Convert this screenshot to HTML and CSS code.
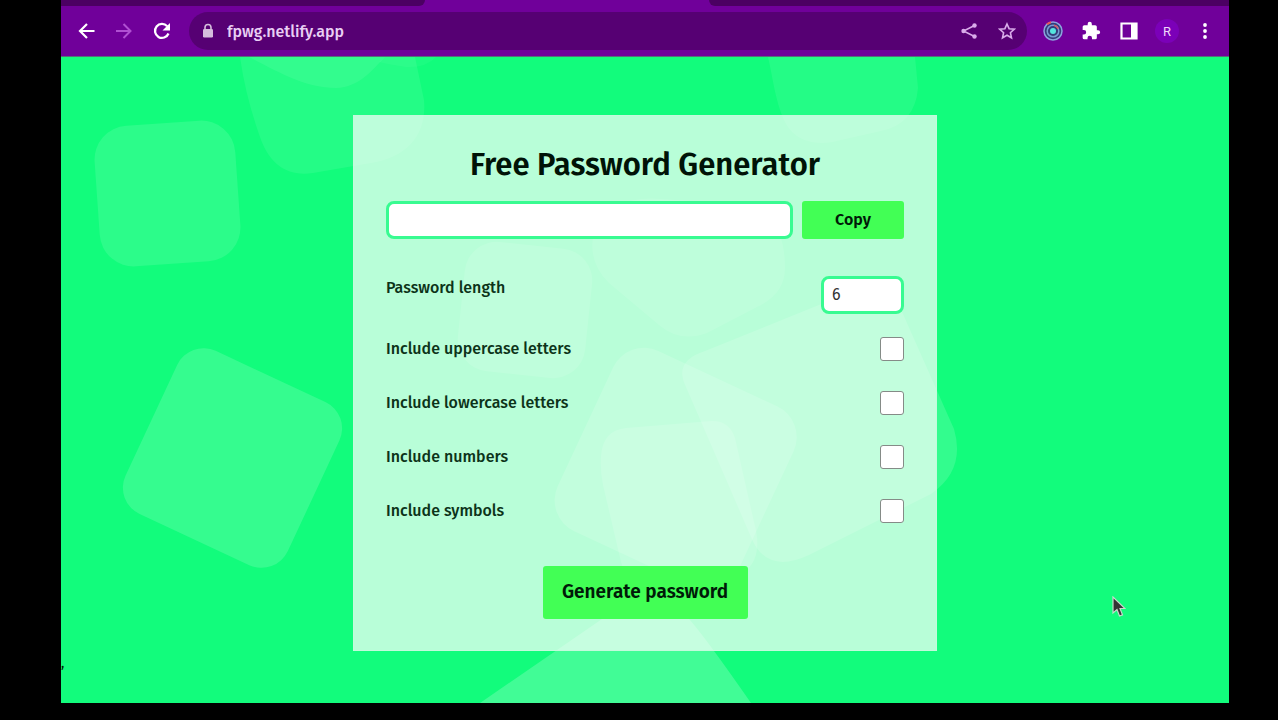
FILE: index.html
```
<!DOCTYPE html>
<html lang="en">
<head>
<meta charset="utf-8">
<meta name="viewport" content="width=device-width, initial-scale=1">
<title>Free Password Generator</title>
<link rel="stylesheet" href="styles.css">
</head>
<body>
<div class="browser">
  <header class="chrome">
    <div class="tabs"><span class="tab tab-before"></span><span class="tab-active"></span><span class="tab tab-after"></span></div>
    <div class="toolbar">
      <nav class="nav" aria-label="Browser navigation">
        <button class="icon" aria-label="Back"><svg width="20" height="20" viewBox="0 0 20 20"><path d="M18.500 10H4M11 3l-7 7 7 7" fill="none" stroke="#fff" stroke-width="2.200"/></svg></button>
        <button class="icon" aria-label="Forward"><svg width="20" height="20" viewBox="0 0 20 20"><path d="M2 10h14.500M9.500 3l7 7-7 7" fill="none" stroke="#b04fd2" stroke-width="2"/></svg></button>
        <button class="icon" aria-label="Reload"><svg width="20" height="20" viewBox="0 0 20 20"><path d="M16.500 12.500A7 7 0 1 1 15.200 5.200" fill="none" stroke="#fff" stroke-width="2.300"/><path d="M18 2v7.500h-7.500z" fill="#fff"/></svg></button>
      </nav>
      <div class="address">
        <svg width="12" height="16" viewBox="0 0 12 16"><path d="M3 7V4.500a3 3 0 0 1 6 0V7" fill="none" stroke="#d5bddc" stroke-width="1.600"/><rect x="1" y="6" width="10" height="8.500" rx="1.200" fill="#d5bddc"/></svg>
        <input class="url" type="text" aria-label="Address" value="fpwg.netlify.app">
        <button class="icon" aria-label="Share"><svg width="18" height="18" viewBox="0 0 18 18"><path d="M14.500 3.500 3.500 9l11 5.500" fill="none" stroke="#d9acea" stroke-width="1.500"/><g fill="#d9acea"><circle cx="14.500" cy="3.500" r="2.200"/><circle cx="3.500" cy="9" r="2.200"/><circle cx="14.500" cy="14.500" r="2.200"/></g></svg></button>
        <button class="icon" aria-label="Bookmark"><svg width="18" height="18" viewBox="0 0 18 18"><path d="m9 2 2.100 4.700 5.200.5-3.900 3.500 1.100 5.100L9 13.200l-4.500 2.600 1.100-5.100-3.900-3.500 5.200-.5z" fill="none" stroke="#d9acea" stroke-width="1.600"/></svg></button>
      </div>
      <div class="extensions">
        <button class="icon" aria-label="Rings extension"><svg width="20" height="20" viewBox="0 0 20 20"><circle cx="10" cy="10" r="9" fill="#343d7c" stroke="#8ba5dd" stroke-width="1.500"/><path d="M4 3.300a9 9 0 0 1 4-2.100" fill="none" stroke="#e85757" stroke-width="2"/><circle cx="10" cy="10" r="5.800" fill="none" stroke="#789bd3" stroke-width="1.500"/><path d="M11 4.300a6 6 0 0 1 4.300 3.500" fill="none" stroke="#dc5968" stroke-width="1.500"/><circle cx="10" cy="10" r="3" fill="#55e5df"/></svg></button>
        <button class="icon" aria-label="Extensions"><svg width="20" height="20" viewBox="0 0 24 24"><path fill="#fff" d="M20.500 11H19V7a2 2 0 0 0-2-2h-4V3.500a2.500 2.500 0 0 0-5 0V5H4a2 2 0 0 0-2 2v3.800h1.500a2.700 2.700 0 0 1 0 5.400H2V20a2 2 0 0 0 2 2h3.800v-1.500a2.700 2.700 0 0 1 5.400 0V22H17a2 2 0 0 0 2-2v-4h1.500a2.500 2.500 0 0 0 0-5z"/></svg></button>
        <button class="icon" aria-label="Side panel"><svg width="18" height="18" viewBox="0 0 18 18"><path d="M1.500 1.500h15v15h-15z" fill="none" stroke="#fff" stroke-width="2.200"/><path d="M11 1h6v16h-6z" fill="#fff"/></svg></button>
        <button class="icon avatar" aria-label="Profile">R</button>
        <button class="icon" aria-label="Menu"><svg width="6" height="18" viewBox="0 0 6 18"><g fill="#fff"><circle cx="3" cy="3" r="1.900"/><circle cx="3" cy="9" r="1.900"/><circle cx="3" cy="15" r="1.900"/></g></svg></button>
      </div>
    </div>
  </header>
  <main class="page">
    <svg class="backdrop" viewBox="0 0 1168 646" preserveAspectRatio="xMidYMid slice" aria-hidden="true">
      <g fill="#fff">
        <rect x="36" y="66" width="141" height="141" rx="34" transform="rotate(-4 106.500 136.500)" opacity=".11"/>
        <rect x="82" y="311" width="179" height="180" rx="29" transform="rotate(25 171.500 401)" opacity=".15"/>
        <path d="M179 0 C183 28 190 55 199 80 C208 106 225 120 252 116 L310 106 C348 100 366 76 363 43 L354 0Z" opacity=".08"/>
        <path d="M188 0 C217 15 244 31 275 31 C299 30 311 13 324 0Z" opacity=".07"/>
        <path d="M324 0H375Q365 11 345 10Q325 7 318 5Z" opacity=".04"/>
        <path d="M707 0 C712 21 714 43 723 63 C733 85 756 90 780 83 L820 74 Q854 67 857 31 L854 0Z" opacity=".08"/>
        <rect x="400" y="188" width="128" height="130" rx="32" transform="rotate(6 464 253)" opacity=".1"/>
        <path d="M533 174Q551 138 600 142L690 148Q724 162 724 211Q724 237 696 250L646 276Q619 286 598 268L548 226Q526 205 533 174Z" opacity=".09"/>
        <path d="M625 330 Q612 304 644 294 L790 235 Q825 224 842 257 L893 372 Q905 413 870 437 L748 498 Q705 518 690 480Z" opacity=".14"/>
        <rect x="515" y="312" width="199" height="199" rx="34" transform="rotate(25 614 412)" opacity=".14"/>
        <path d="M540 399Q542 373 565 371L650 364Q668 363 674 381L693 465Q705 508 674 520L610 536Q570 541 560 505L542 428Q539 414 540 399Z" opacity=".13"/>
        <path d="M419 646 L541 562 Q584 530 622 556 Q633 564 690 646Z" opacity=".2"/>
      </g>
    </svg>
    <form class="card">
      <h1 class="title">Free Password Generator</h1>
      <div class="result">
        <input class="field" type="text" aria-label="Generated password">
        <button class="btn btn-copy" type="button">Copy</button>
      </div>
      <div class="options">
        <div class="row row-length"><label for="length">Password length</label><input class="field field-length" id="length" type="number" value="6"></div>
        <div class="row"><label for="upper">Include uppercase letters</label><input class="check" id="upper" type="checkbox"></div>
        <div class="row"><label for="lower">Include lowercase letters</label><input class="check" id="lower" type="checkbox"></div>
        <div class="row"><label for="numbers">Include numbers</label><input class="check" id="numbers" type="checkbox"></div>
        <div class="row"><label for="symbols">Include symbols</label><input class="check" id="symbols" type="checkbox"></div>
      </div>
      <button class="btn btn-generate" type="button">Generate password</button>
    </form>
    <span class="stray">,</span>
    <svg class="pointer" width="14" height="22" viewBox="0 0 14 22" aria-hidden="true"><path d="M1 1v16l4-3.500 2.500 6.500 3-1.200L8 12.500h5z" fill="#343434" stroke="#c8d8cc" stroke-width="1.200"/></svg>
  </main>
</div>
</body>
</html>
```
FILE: styles.css
```
* { box-sizing: border-box; }

body {
  margin: 0;
  background: #000;
  color: #001b08;
  font-family: "Fira Sans", "Noto Sans", sans-serif;
}

button, input { font: inherit; color: inherit; }

.browser {
  display: flex;
  flex-direction: column;
  min-height: 100vh;
  padding: 0 49px 17px 61px;
}

.chrome { background: #70009a; border-bottom: 1px solid #557078; }
.tabs { display: flex; height: 6px; }
.tab { background: #4b0062; }
.tab-before { flex: 364; border-bottom-right-radius: 6px; }
.tab-active { flex: 284; }
.tab-after { flex: 520; border-bottom-left-radius: 6px; }

.toolbar { display: flex; align-items: center; height: 50px; padding: 0 14px 0 15px; }
.nav { display: flex; gap: 18px; margin-right: 17px; }
.icon {
  display: grid;
  place-items: center;
  flex: none;
  width: 20px;
  height: 20px;
  padding: 0;
  border: 0;
  background: none;
}
.address {
  display: flex;
  flex: 1;
  align-items: center;
  gap: 18px;
  height: 38px;
  padding: 0 10px 0 13px;
  border-radius: 19px;
  background: #560073;
}
.url {
  flex: 1;
  min-width: 0;
  margin-left: -5px;
  padding: 0;
  border: 0;
  outline: 0;
  background: none;
  color: #e9cff4;
  font-size: 16px;
  font-weight: 500;
}
.extensions { display: flex; align-items: center; gap: 18px; margin-left: 16px; }
.avatar {
  width: 24px;
  height: 24px;
  margin: 0 -2px;
  border-radius: 50%;
  background: #7b00b8;
  color: #efd9fa;
  font-family: Roboto, sans-serif;
  font-size: 13px;
}

.page { position: relative; flex: 1; overflow: hidden; background: #12fc7c; }
.backdrop { position: absolute; inset: 0; width: 100%; height: 100%; }

.card {
  position: relative;
  display: flex;
  flex-direction: column;
  width: 50%;
  min-width: 420px;
  margin: 58px auto 51px;
  padding: 29px 32px 31px;
  border: 1px solid #c3fadb;
  background: rgba(255, 255, 255, .7);
}
.title { margin: 0 0 16px; font-size: 31px; font-weight: 600; line-height: 40px; text-align: center; color: #001307; }

.result { display: flex; gap: 9px; }
.field {
  flex: 1;
  min-width: 0;
  height: 38px;
  padding: 0 8px;
  border: 3px solid #38fb91;
  border-radius: 8px;
  outline: 0;
  background: #fff;
  font-size: 16px;
  font-weight: 400;
}
.field-length { flex: none; width: 83px; padding-bottom: 2px; color: #333; appearance: textfield; }
.field-length::-webkit-inner-spin-button { appearance: none; }

.btn { border: 0; border-radius: 3px; background: #42ff55; font-weight: 600; }
.btn-copy { width: 102px; padding: 0 0 2px; font-size: 16px; }
.btn-generate { align-self: center; width: 205px; height: 53px; padding: 0 0 2px; font-size: 19px; }

.options { display: flex; flex-direction: column; gap: 30px; margin: 37px 0 43px; font-size: 16px; font-weight: 500; line-height: 24px; color: #0c3319; }
.row { display: flex; justify-content: space-between; align-items: center; }
.row-length { align-items: flex-start; margin-bottom: -7px; }
.check {
  width: 24px;
  height: 24px;
  margin: 0;
  border: 1px solid #858b87;
  border-radius: 3px;
  background: #fff;
  appearance: none;
}
.check:checked { background: #42ff55; }

.stray { position: absolute; left: 0; bottom: 31px; font-size: 14px; }
.pointer { position: absolute; left: 1051px; top: 539px; }
```
